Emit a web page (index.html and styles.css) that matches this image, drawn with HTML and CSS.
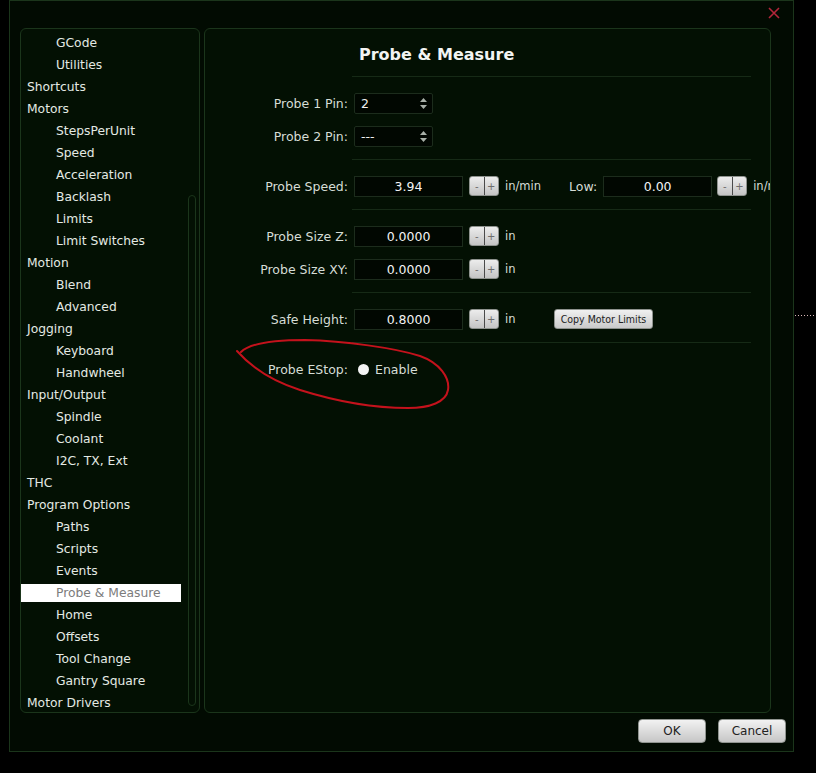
FILE: index.html
```html
<!DOCTYPE html>
<html lang="en">
  <head>
    <meta charset="UTF-8" />
    <meta name="viewport" content="width=device-width, initial-scale=1" />
    <title>Settings - Probe &amp; Measure</title>
    <link rel="stylesheet" href="styles.css">
  </head>
  <body>
    <div class="dialog">
      <button class="close" title="Close">
        <svg width="12" height="12" viewBox="0 0 12 12">
          <path d="M1 1 L11 11 M11 1 L1 11" stroke="#b3263a" stroke-width="1.6" fill="none" />
        </svg>
      </button>

      <div class="panes">
        <aside class="sidebar">
          <ul class="tree">
            <li class="item sub">GCode</li>
            <li class="item sub">Utilities</li>
            <li class="item">Shortcuts</li>
            <li class="item">Motors</li>
            <li class="item sub">StepsPerUnit</li>
            <li class="item sub">Speed</li>
            <li class="item sub">Acceleration</li>
            <li class="item sub">Backlash</li>
            <li class="item sub">Limits</li>
            <li class="item sub">Limit Switches</li>
            <li class="item">Motion</li>
            <li class="item sub">Blend</li>
            <li class="item sub">Advanced</li>
            <li class="item">Jogging</li>
            <li class="item sub">Keyboard</li>
            <li class="item sub">Handwheel</li>
            <li class="item">Input/Output</li>
            <li class="item sub">Spindle</li>
            <li class="item sub">Coolant</li>
            <li class="item sub">I2C, TX, Ext</li>
            <li class="item">THC</li>
            <li class="item">Program Options</li>
            <li class="item sub">Paths</li>
            <li class="item sub">Scripts</li>
            <li class="item sub">Events</li>
            <li class="item sub selected">Probe &amp; Measure</li>
            <li class="item sub">Home</li>
            <li class="item sub">Offsets</li>
            <li class="item sub">Tool Change</li>
            <li class="item sub">Gantry Square</li>
            <li class="item">Motor Drivers</li>
          </ul>
          <div class="scrollbar"></div>
        </aside>

        <section class="page">
          <h1 class="title">Probe &amp; Measure</h1>

          <div class="group">
            <div class="row">
              <label class="label">Probe 1 Pin:</label>
              <div class="select">
                <span>2</span>
                <svg width="7" height="11" viewBox="0 0 7 11"><path d="M3.5 0 L7 4 H0 Z M3.5 11 L7 7 H0 Z" fill="#a8b0a8" /></svg>
              </div>
            </div>
            <div class="row">
              <label class="label">Probe 2 Pin:</label>
              <div class="select">
                <span>---</span>
                <svg width="7" height="11" viewBox="0 0 7 11"><path d="M3.5 0 L7 4 H0 Z M3.5 11 L7 7 H0 Z" fill="#a8b0a8" /></svg>
              </div>
            </div>
          </div>

          <div class="group">
            <div class="row">
              <label class="label">Probe Speed:</label>
              <div class="field">3.94</div>
              <div class="spin"><span>-</span><span>+</span></div>
              <span class="unit">in/min</span>
              <label class="label-inline">Low:</label>
              <div class="field">0.00</div>
              <div class="spin spin-tight"><span>-</span><span>+</span></div>
              <span class="unit">in/min</span>
            </div>
          </div>

          <div class="group">
            <div class="row">
              <label class="label">Probe Size Z:</label>
              <div class="field">0.0000</div>
              <div class="spin"><span>-</span><span>+</span></div>
              <span class="unit">in</span>
            </div>
            <div class="row">
              <label class="label">Probe Size XY:</label>
              <div class="field">0.0000</div>
              <div class="spin"><span>-</span><span>+</span></div>
              <span class="unit">in</span>
            </div>
          </div>

          <div class="group">
            <div class="row">
              <label class="label">Safe Height:</label>
              <div class="field">0.8000</div>
              <div class="spin"><span>-</span><span>+</span></div>
              <span class="unit">in</span>
              <button class="small-btn">Copy Motor Limits</button>
            </div>
          </div>

          <div class="group">
            <div class="row">
              <label class="label">Probe EStop:</label>
              <span class="radio"></span>
              <span class="radio-text">Enable</span>
            </div>
          </div>
        </section>
      </div>

      <div class="footer">
        <button class="btn">OK</button>
        <button class="btn">Cancel</button>
      </div>
    </div>

    <!-- hand-drawn markup on top of the screenshot -->
    <svg class="markup" width="816" height="773" viewBox="0 0 816 773">
      <path d="M241 352 C250 343, 275 340, 305 340 C345 341, 395 348, 420 356 C440 363, 450 378, 448 390 C446 402, 430 408, 408 408 C375 408, 335 401, 300 390 C275 382, 252 368, 237 351"
        stroke="#c4121c" stroke-width="2" fill="none" stroke-linecap="round" />
      <line x1="795" y1="315.5" x2="816" y2="315.5" stroke="#d8b8b8" stroke-width="1" stroke-dasharray="1 2" />
    </svg>
  </body>
</html>
```

FILE: styles.css
```css
:root {
  --bg: #000;
  --dialog: #020b02;
  --panel: #031003;
  --border: #1b351b;
  --line: #162a16;
  --field: #010701;
  --field-border: #1c2c1c;
  --text: #e4eae4;
  --label: #d6ddd6;
  --muted: #7c7c7c;
}
* {
  box-sizing: border-box;
}
body {
  margin: 0;
  background: var(--bg);
  font-family: "DejaVu Sans", Verdana, sans-serif;
  color: var(--text);
  width: 816px;
  height: 773px;
  overflow: hidden;
  position: relative;
}
.dialog {
  position: relative;
  margin-left: 9px;
  width: 785px;
  height: 752px;
  background: var(--dialog);
  border: 1px solid var(--border);
  padding: 27px 7px 0 10px;
}
.close {
  position: absolute;
  top: 6px;
  right: 13px;
  width: 12px;
  height: 12px;
  padding: 0;
  border: none;
  background: none;
  display: flex;
}
.panes {
  display: flex;
  gap: 4px;
  height: 685px;
}
.sidebar {
  width: 180px;
  display: flex;
  background: var(--panel);
  border: 1px solid var(--border);
  border-radius: 6px;
  overflow: hidden;
}
.tree {
  list-style: none;
  margin: 0;
  padding: 3px 0 0 0;
  width: 167px;
  font-size: 12.3px;
}
.item {
  height: 22px;
  line-height: 22px;
  padding-left: 6px;
  white-space: nowrap;
  width: 160px;
}
.item.sub {
  padding-left: 35px;
}
.item.selected {
  height: 18px;
  line-height: 18px;
  margin: 2px 0;
  background: #fff;
  color: var(--muted);
}
.scrollbar {
  width: 8px;
  margin: 166px 2px 6px 0;
  border: 1px solid var(--border);
  border-radius: 5px;
}
.page {
  width: 567px;
  background: var(--panel);
  border: 1px solid var(--border);
  border-radius: 6px;
  padding-top: 16px;
  overflow: hidden;
}
.title {
  margin: 0 0 11px 154px;
  font-size: 16px;
  line-height: 20px;
  font-weight: bold;
  color: #f2f4f2;
}
.group {
  margin-left: 147px;
  width: 399px;
  border-top: 1px solid var(--line);
  padding: 15px 0 12px 0;
}
.row {
  display: flex;
  align-items: center;
  height: 22px;
  margin-left: -147px;
  width: 567px;
  font-size: 12.5px;
  white-space: nowrap;
}
.row > * {
  flex: none;
}
.row + .row {
  margin-top: 11px;
}
.label {
  width: 143px;
  margin-right: 6px;
  text-align: right;
  color: var(--label);
}
.select {
  width: 79px;
  height: 21px;
  display: flex;
  align-items: center;
  justify-content: space-between;
  padding: 0 5px 0 6px;
  background: var(--field);
  border: 1px solid var(--field-border);
  border-radius: 2px;
  color: #f0f0f0;
}
.field {
  width: 109px;
  height: 21px;
  line-height: 19px;
  text-align: center;
  background: var(--field);
  border: 1px solid var(--field-border);
  color: #f4f4f4;
}
.spin {
  display: flex;
  width: 30px;
  height: 20px;
  margin-left: 6px;
  border-radius: 3px;
  overflow: hidden;
  background: linear-gradient(#ececec, #c4c4c4);
  border: 1px solid #8e928e;
  color: #6c6c6c;
  font-size: 10px;
}
.spin span {
  flex: 1;
  display: flex;
  align-items: center;
  justify-content: center;
}
.spin span + span {
  border-left: 1px solid #4a4a4a;
}
.spin-tight {
  margin-left: 5px;
}
.unit {
  margin-left: 6px;
  min-width: 43px;
  font-size: 11.5px;
  color: var(--label);
}
.label-inline {
  margin: 0 6px 0 21px;
  color: var(--label);
}
.small-btn {
  margin-left: 6px;
  width: 99px;
  height: 20px;
  padding: 0;
  border: 1px solid #8e928e;
  border-radius: 3px;
  background: linear-gradient(#f0f0f0, #cacaca);
  color: #222;
  font-family: "DejaVu Sans Condensed", "DejaVu Sans", sans-serif;
  font-size: 10.5px;
}
.radio {
  width: 11px;
  height: 11px;
  margin-left: 4px;
  border-radius: 50%;
  background: #f4f4f4;
}
.radio-text {
  margin-left: 6px;
  color: var(--label);
}
.footer {
  display: flex;
  justify-content: flex-end;
  gap: 12px;
  margin-top: 6px;
}
.btn {
  width: 68px;
  height: 24px;
  padding: 0;
  border: 1px solid #909490;
  border-radius: 4px;
  background: linear-gradient(#f2f2f2, #c6c6c6);
  color: #222;
  font-family: "DejaVu Sans", Verdana, sans-serif;
  font-size: 12px;
}
.markup {
  position: absolute;
  left: 0;
  top: 0;
  pointer-events: none;
}
```
